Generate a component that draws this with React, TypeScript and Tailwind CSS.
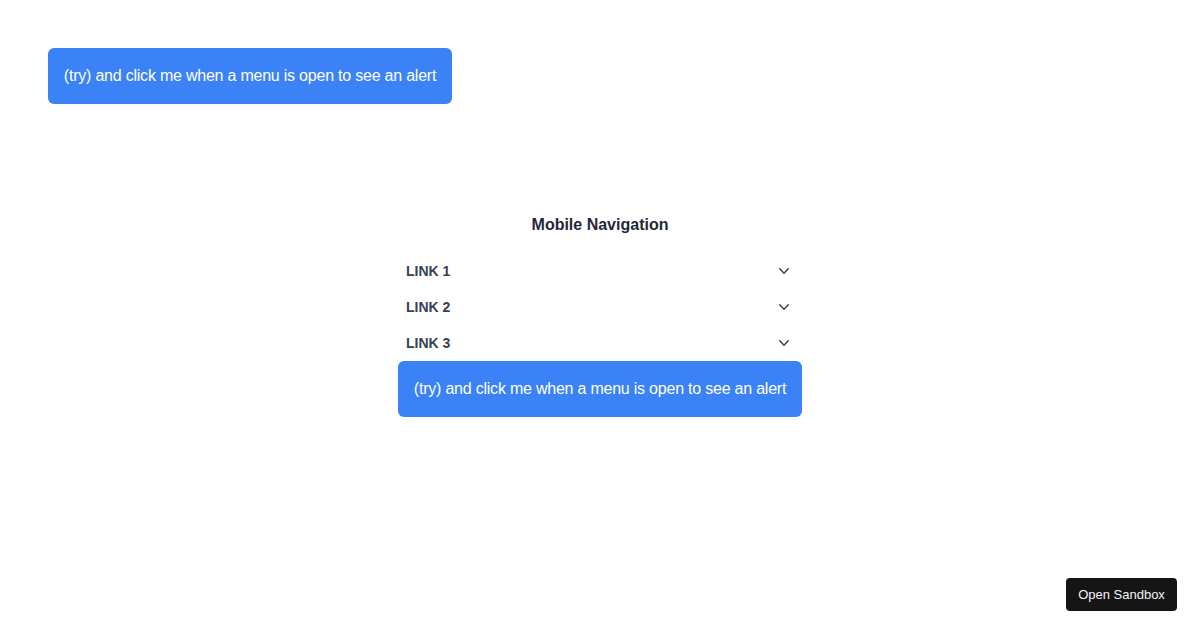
import React, { useState } from 'react';

const links = ['LINK 1', 'LINK 2', 'LINK 3'];

const ChevronDown: React.FC = () => (
  <svg viewBox="0 0 20 20" fill="currentColor" className="h-5 w-5">
    <path
      fillRule="evenodd"
      d="M5.23 7.21a.75.75 0 011.06.02L10 11.168l3.71-3.938a.75.75 0 111.08 1.04l-4.25 4.5a.75.75 0 01-1.08 0l-4.25-4.5a.75.75 0 01.02-1.06z"
      clipRule="evenodd"
    />
  </svg>
);

const AlertButton: React.FC = () => (
  <button
    onClick={() => alert('clicked')}
    className="h-14 w-[404px] whitespace-nowrap rounded-md bg-[#3b82f6] text-base tracking-[-0.22px] text-white"
  >
    (try) and click me when a menu is open to see an alert
  </button>
);

export default function App() {
  const [open, setOpen] = useState<number | null>(null);

  return (
    <div
      className="relative min-h-[630px] w-full bg-white p-12"
      style={{ fontFamily: '"Liberation Sans", Arial, sans-serif' }}
    >
      <AlertButton />

      <div className="mx-auto mt-[109px] flex w-[404px] flex-col">
        <h2 className="text-center text-base leading-6 font-bold text-[#1f2937]">Mobile Navigation</h2>
        <ul className="mt-4 flex flex-col">
          {links.map((label, i) => (
            <li key={label}>
              <button
                onClick={() => setOpen(open === i ? null : i)}
                className="flex h-9 w-full items-center justify-between px-2 text-sm font-bold text-[#374151]"
              >
                <span>{label}</span>
                <ChevronDown />
              </button>
            </li>
          ))}
        </ul>
        <AlertButton />
      </div>

      <button className="absolute right-[23px] bottom-[19px] h-[33px] w-[111px] rounded bg-[#151515] text-[13px] text-gray-100">
        Open Sandbox
      </button>
    </div>
  );
}
